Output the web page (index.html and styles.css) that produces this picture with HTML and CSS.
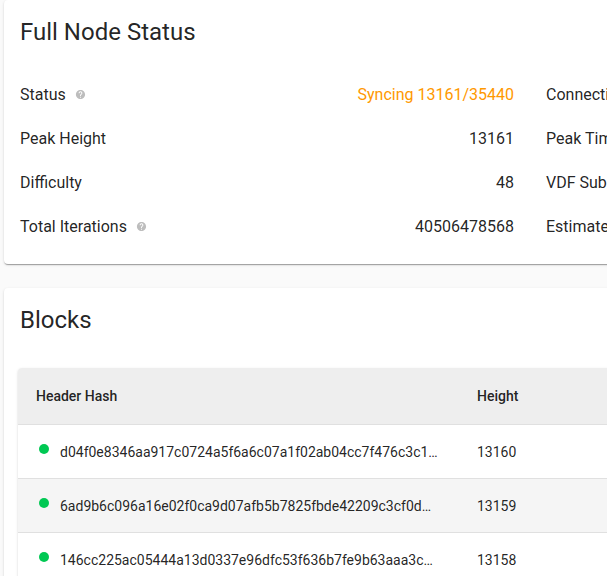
FILE: index.html
```html
<!DOCTYPE html>
<html lang="en">
<head>
    <meta charset="UTF-8">
    <meta name="viewport" content="width=device-width, initial-scale=1.0">
    <title>Full Node</title>
    <link rel="stylesheet" href="styles.css">
</head>
<body>
    <div class="page">
        <div class="card">
            <h2 class="card-title">Full Node Status</h2>

            <div class="status-grid">
                <div class="status-row">
                    <span class="status-label">Status
                        <svg class="help-icon" viewBox="0 0 24 24"><path d="M12 2C6.48 2 2 6.48 2 12s4.48 10 10 10 10-4.48 10-10S17.52 2 12 2zm1 17h-2v-2h2v2zm2.07-7.75l-.9.92C13.45 12.9 13 13.5 13 15h-2v-.5c0-1.1.45-2.1 1.170-2.83l1.24-1.26c.37-.36.59-.86.59-1.41 0-1.1-.9-2-2-2s-2 .9-2 2H8c0-2.21 1.79-4 4-4s4 1.79 4 4c0 .88-.36 1.68-.93 2.25z"/></svg>
                    </span>
                    <span class="status-value syncing">Syncing 13161/35440</span>
                </div>
                <div class="status-row">
                    <span class="status-label">Connection Status</span>
                    <span class="status-value connected">Connected</span>
                </div>

                <div class="status-row">
                    <span class="status-label">Peak Height</span>
                    <span class="status-value">13161</span>
                </div>
                <div class="status-row">
                    <span class="status-label">Peak Time</span>
                    <span class="status-value">Apr 12, 2021 10:21 AM</span>
                </div>

                <div class="status-row">
                    <span class="status-label">Difficulty</span>
                    <span class="status-value">48</span>
                </div>
                <div class="status-row">
                    <span class="status-label">VDF Sub Slot Iterations</span>
                    <span class="status-value">84410368</span>
                </div>

                <div class="status-row">
                    <span class="status-label">Total Iterations
                        <svg class="help-icon" viewBox="0 0 24 24"><path d="M12 2C6.48 2 2 6.480 2 12s4.48 10 10 10 10-4.48 10-10S17.52 2 12 2zm1 17h-2v-2h2v2zm2.07-7.75l-.9.92C13.45 12.9 13 13.5 13 15h-2v-.5c0-1.1.45-2.1 1.17-2.83l1.24-1.26c.37-.36.59-.86.59-1.41 0-1.1-.9-2-2-2s-2 .9-2 2H8c0-2.21 1.79-4 4-4s4 1.79 4 4c0 .88-.36 1.68-.93 2.25z"/></svg>
                    </span>
                    <span class="status-value">40506478568</span>
                </div>
                <div class="status-row">
                    <span class="status-label">Estimated network space</span>
                    <span class="status-value">1.214 EiB</span>
                </div>
            </div>
        </div>

        <div class="card">
            <h2 class="card-title">Blocks</h2>

            <div class="table-paper">
                <table class="blocks-table">
                    <thead>
                        <tr>
                            <th class="col-hash">Header Hash</th>
                            <th>Height</th>
                            <th>Time Created</th>
                            <th>State</th>
                        </tr>
                    </thead>
                    <tbody>
                        <tr>
                            <td class="col-hash">
                                <div class="hash-cell">
                                    <span class="dot"></span>
                                    <span class="hash-text">d04f0e8346aa917c0724a5f6a6c07a1f02ab04cc7f476c3c1…</span>
                                </div>
                            </td>
                            <td>13160</td>
                            <td>4/12/2021, 10:21:04 AM</td>
                            <td>Finished</td>
                        </tr>
                        <tr class="striped">
                            <td class="col-hash">
                                <div class="hash-cell">
                                    <span class="dot"></span>
                                    <span class="hash-text">6ad9b6c096a16e02f0ca9d07afb5b7825fbde42209c3cf0d…</span>
                                </div>
                            </td>
                            <td>13159</td>
                            <td>4/12/2021, 10:20:41 AM</td>
                            <td>Finished</td>
                        </tr>
                        <tr>
                            <td class="col-hash">
                                <div class="hash-cell">
                                    <span class="dot"></span>
                                    <span class="hash-text">146cc225ac05444a13d0337e96dfc53f636b7fe9b63aaa3c…</span>
                                </div>
                            </td>
                            <td>13158</td>
                            <td>4/12/2021, 10:20:13 AM</td>
                            <td>Finished</td>
                        </tr>
                    </tbody>
                </table>
            </div>
        </div>
    </div>
</body>
</html>
```

FILE: styles.css
```css
:root {
    --text-color: rgba(0, 0, 0, 0.87);
    --page-bg: #fafafa;
    --header-bg: #eeeeee;
    --stripe-bg: #f5f5f5;
    --border-color: #e0e0e0;
    --orange: #ff9800;
    --green: #00c853;
    --help-grey: #bdbdbd;
}

html, body {
    overflow: hidden;
}

body {
    font-family: Roboto, 'Liberation Sans', sans-serif;
    background: var(--page-bg);
    color: var(--text-color);
    margin: 0;
}

.page {
    width: 1100px;
    padding: 0 0 0 4px;
    display: flex;
    flex-direction: column;
    gap: 24px;
}

.card {
    background: white;
    border-radius: 4px;
    padding: 16px;
    box-shadow: 0 2px 1px -1px rgba(0, 0, 0, 0.2), 0 1px 1px 0 rgba(0, 0, 0, 0.14), 0 1px 3px 0 rgba(0, 0, 0, 0.12);
}

.card-title {
    margin: 0;
    font-size: 24px;
    font-weight: 400;
    line-height: 32px;
}

/* ステータス */
.status-grid {
    display: grid;
    grid-template-columns: 494px 494px;
    column-gap: 32px;
    margin-top: 24px;
}

.status-row {
    display: flex;
    justify-content: space-between;
    align-items: center;
    height: 44px;
    font-size: 16px;
}

.status-label {
    display: flex;
    align-items: center;
    gap: 9px;
}

.help-icon {
    width: 11px;
    height: 11px;
    fill: var(--help-grey);
}

.syncing {
    color: var(--orange);
}

.connected {
    color: #3aac59;
}

/* テーブル */
.table-paper {
    margin: 32px -2px 0;
    border-radius: 4px;
    overflow: hidden;
    box-shadow: 0 2px 1px -1px rgba(0, 0, 0, 0.2), 0 1px 1px 0 rgba(0, 0, 0, 0.14), 0 1px 3px 0 rgba(0, 0, 0, 0.12);
}

.blocks-table {
    width: 100%;
    border-collapse: collapse;
    font-size: 14px;
    line-height: 20px;
}

.blocks-table th,
.blocks-table td {
    text-align: left;
    padding: 0 16px;
    border-bottom: 1px solid var(--border-color);
    white-space: nowrap;
}

.blocks-table th {
    background: var(--header-bg);
    font-weight: 500;
    height: 56px;
}

.blocks-table td {
    height: 53px;
}

.blocks-table .col-hash {
    width: 409px;
    padding-left: 18px;
}

.striped td {
    background: var(--stripe-bg);
}

.hash-cell {
    display: flex;
    align-items: flex-start;
    gap: 11px;
}

.dot {
    flex: none;
    width: 10px;
    height: 10px;
    margin: 2px 0 0 3px;
    border-radius: 50%;
    background: var(--green);
}

.hash-text {
    max-width: 385px;
    overflow: hidden;
    text-overflow: ellipsis;
}
```
